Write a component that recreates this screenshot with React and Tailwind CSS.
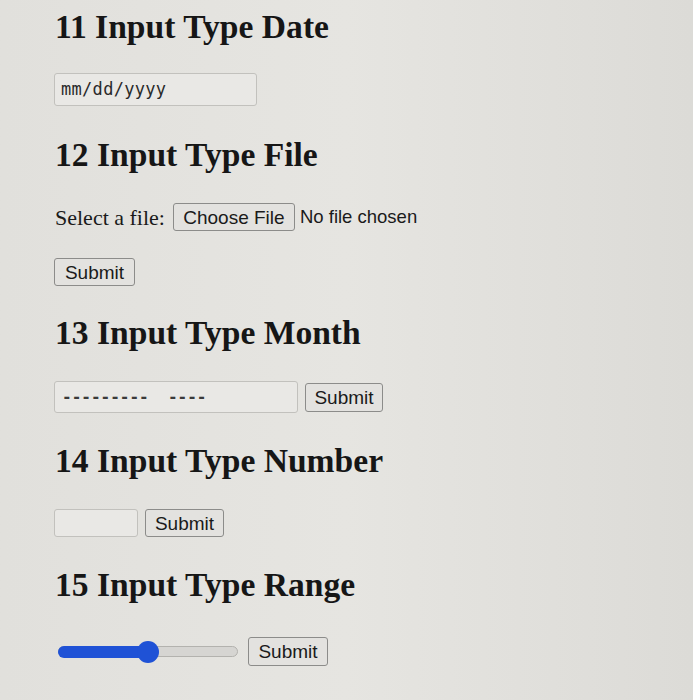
export default function App() {
  const h = "font-['Liberation_Serif',serif] font-bold text-[33.6px] leading-[38px] text-[#161616]";
  const btn = "flex items-center justify-center border border-[#8c8c8a] rounded-[3px] bg-[#e3e2df] font-['Liberation_Sans',Arial,sans-serif] text-[19px] text-[#1a1a1a] leading-none";
  const input = "border border-[#c2c1bd] rounded-[3px] bg-[#e9e8e5]";
  return (
    <div className="w-[693px] h-[700px] overflow-hidden bg-[#e3e2de] bg-gradient-to-r from-[#e1e0dc] via-[#e6e5e1] to-[#dcdbd7] pl-[55px] pt-[8px]">
      <h1 className={h}>11 Input Type Date</h1>
      <div className={`${input} mt-[27px] ml-[-1px] w-[203px] h-[33px] flex items-center pl-[6px]`}>
        <span className="font-['DejaVu_Sans_Mono',monospace] text-[17px] text-[#2a2a2a] tracking-[0.3px]">mm/dd/yyyy</span>
      </div>

      <h2 className={`${h} mt-[30px]`}>12 Input Type File</h2>
      <div className="mt-[29px] flex items-center h-[28px]">
        <span className="font-['Liberation_Serif',serif] text-[22px] text-[#1a1a1a] mr-[8px]">Select a file:</span>
        <div className={`${btn} w-[122px] h-[28px]`}>Choose File</div>
        <span className="ml-[5px] font-['Liberation_Sans',Arial,sans-serif] text-[18.5px] text-[#1a1a1a]">No file chosen</span>
      </div>
      <div className={`${btn} mt-[27px] ml-[-1px] w-[81px] h-[28px]`}>Submit</div>

      <h2 className={`${h} mt-[28px]`}>13 Input Type Month</h2>
      <div className="mt-[29px] flex items-center ml-[-1px]">
        <div className={`${input} w-[244px] h-[32px] flex items-center pl-[7px]`}>
          <span className="font-['DejaVu_Sans_Mono',monospace] text-[16px] font-bold text-[#3a3a3a] whitespace-pre">---------  ----</span>
        </div>
        <div className={`${btn} ml-[7px] w-[78px] h-[29px]`}>Submit</div>
      </div>

      <h2 className={`${h} mt-[29px]`}>14 Input Type Number</h2>
      <div className="mt-[29px] flex items-center ml-[-1px]">
        <div className={`${input} w-[84px] h-[28px]`} />
        <div className={`${btn} ml-[7px] w-[79px] h-[28px]`}>Submit</div>
      </div>

      <h2 className={`${h} mt-[29px]`}>15 Input Type Range</h2>
      <div className="mt-[33px] flex items-center">
        <div className="relative ml-[3px] w-[180px] h-[22px] flex items-center">
          <div className="w-full h-[11px] rounded-full bg-[#d6d5d2] border border-[#b3b2ae]" />
          <div className="absolute left-0 top-[5px] w-[92px] h-[12px] rounded-full bg-[#1f52d6]" />
          <div className="absolute left-[79px] top-0 w-[22px] h-[22px] rounded-full bg-[#1f52d6]" />
        </div>
        <div className={`${btn} ml-[10px] w-[80px] h-[29px]`}>Submit</div>
      </div>
    </div>
  );
}
